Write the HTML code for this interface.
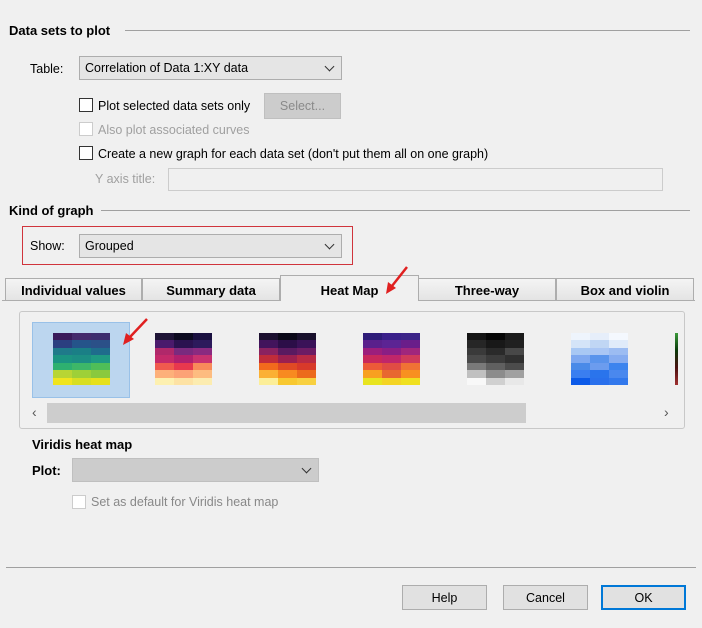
<!DOCTYPE html>
<html><head><style>
body{margin:0;width:702px;height:628px;background:#f0f0f0;font-family:"Liberation Sans",sans-serif;font-size:12.5px;color:#000;position:relative;overflow:hidden}
.a{position:absolute}
.h{font-weight:bold;font-size:13px}
.line{position:absolute;height:1px;background:#a0a0a0}
.combo{position:absolute;background:#e5e5e5;border:1px solid #adadad;box-sizing:border-box;padding:4px 5px;font-size:12.5px}
.combo:after{content:"";position:absolute;right:8px;top:6px;width:6px;height:6px;border-right:1px solid #333;border-bottom:1px solid #333;transform:rotate(45deg)}
.cb{position:absolute;width:14px;height:14px;border:1px solid #333;background:#fff;box-sizing:border-box}
.tab{position:absolute;top:278px;height:22px;border:1px solid #adadad;border-bottom:none;background:linear-gradient(#f4f4f4,#e4e4e4);box-sizing:border-box;text-align:center;font-weight:bold;font-size:13px;line-height:24px}
.hm{position:absolute;top:333px;width:57px;height:52px;display:grid;grid-template-columns:repeat(3,1fr);grid-template-rows:repeat(7,1fr)}
.btn{position:absolute;top:585px;height:25px;width:85px;background:#e1e1e1;border:1px solid #adadad;box-sizing:border-box;text-align:center;line-height:24px}
.gray{color:#a0a0a0}
</style></head><body>
<div class="a h" style="left:9px;top:23px">Data sets to plot</div>
<div class="line" style="left:125px;top:30px;width:565px"></div>
<div class="a" style="left:30px;top:62px">Table:</div>
<div class="combo" style="left:79px;top:56px;width:263px;height:24px">Correlation of Data 1:XY data</div>
<div class="cb" style="left:79px;top:98px"></div>
<div class="a" style="left:98px;top:99px">Plot selected data sets only</div>
<div class="a" style="left:264px;top:93px;width:77px;height:26px;background:#ccc;border:1px solid #bfbfbf;box-sizing:border-box;text-align:center;line-height:24px;color:#8a8a8a">Select...</div>
<div class="cb" style="left:79px;top:122px;border-color:#ccc"></div>
<div class="a gray" style="left:98px;top:123px">Also plot associated curves</div>
<div class="cb" style="left:79px;top:146px"></div>
<div class="a" style="left:98px;top:147px">Create a new graph for each data set (don't put them all on one graph)</div>
<div class="a gray" style="left:95px;top:172px">Y axis title:</div>
<div class="a" style="left:168px;top:168px;width:495px;height:23px;border:1px solid #ccc;box-sizing:border-box;background:#f0f0f0"></div>
<div class="a h" style="left:9px;top:203px">Kind of graph</div>
<div class="line" style="left:101px;top:210px;width:589px"></div>
<div class="a" style="left:22px;top:226px;width:331px;height:39px;border:1px solid #d0343c;box-sizing:border-box"></div>
<div class="a" style="left:30px;top:239px">Show:</div>
<div class="combo" style="left:79px;top:234px;width:263px;height:24px">Grouped</div>

<div class="line" style="left:2px;top:300px;width:693px;background:#adadad"></div>
<div class="tab" style="left:5px;width:137px">Individual values</div>
<div class="tab" style="left:142px;width:138px">Summary data</div>
<div class="tab" style="left:280px;top:275px;height:26px;width:139px;background:#f0f0f0;line-height:30px;z-index:2">Heat Map</div>
<div class="tab" style="left:418px;width:138px">Three-way</div>
<div class="tab" style="left:556px;width:138px">Box and violin</div>
<svg class="a" style="left:380px;top:264px;z-index:3" width="30" height="35"><path d="M27 3 L12 22" stroke="#e02020" stroke-width="2.5"/><path d="M6 30 L8 18 L16 24 Z" fill="#e02020"/></svg>

<div class="a" style="left:19px;top:311px;width:666px;height:118px;border:1px solid #c8c8c8;border-radius:3px;box-sizing:border-box;background:#f0f0f0"></div>
<div class="a" style="left:32px;top:322px;width:98px;height:76px;background:#bcd6ef;border:1px solid #99c1e8;box-sizing:border-box"></div>
<svg class="a" style="left:120px;top:316px;z-index:3" width="30" height="32"><path d="M27 3 L10 21" stroke="#e02020" stroke-width="2.5"/><path d="M3 29 L6 17 L14 23 Z" fill="#e02020"/></svg>

<div class="hm" style="left:53px"><i style="background:#3a1a5a"></i><i style="background:#442a6c"></i><i style="background:#3d2d6e"></i><i style="background:#2b3f80"></i><i style="background:#25548a"></i><i style="background:#2b5088"></i><i style="background:#1f7a8a"></i><i style="background:#1a7f86"></i><i style="background:#1f6c8c"></i><i style="background:#1b9482"></i><i style="background:#1c8e84"></i><i style="background:#1f9a83"></i><i style="background:#2eb070"></i><i style="background:#3db768"></i><i style="background:#4fbe58"></i><i style="background:#b8d534"></i><i style="background:#9ed038"></i><i style="background:#8ac93e"></i><i style="background:#f0e41e"></i><i style="background:#d8de22"></i><i style="background:#e6e01c"></i></div>
<div class="hm" style="left:155px"><i style="background:#1e1436"></i><i style="background:#0c0a20"></i><i style="background:#1a1040"></i><i style="background:#4a1a6c"></i><i style="background:#2a1250"></i><i style="background:#2c1a5c"></i><i style="background:#b0286a"></i><i style="background:#7a2a7e"></i><i style="background:#8a2a80"></i><i style="background:#c42a6a"></i><i style="background:#b0206e"></i><i style="background:#c83270"></i><i style="background:#f05a4e"></i><i style="background:#e8384e"></i><i style="background:#f88a5a"></i><i style="background:#fdb07a"></i><i style="background:#fca276"></i><i style="background:#fdbc80"></i><i style="background:#fdf0b0"></i><i style="background:#fde2a4"></i><i style="background:#fcecb0"></i></div>
<div class="hm" style="left:259px"><i style="background:#1c1030"></i><i style="background:#0a0818"></i><i style="background:#18102c"></i><i style="background:#42145c"></i><i style="background:#2c0e48"></i><i style="background:#3a1258"></i><i style="background:#8a2260"></i><i style="background:#5a1a60"></i><i style="background:#6c1c64"></i><i style="background:#c02c3a"></i><i style="background:#9c2050"></i><i style="background:#b82a44"></i><i style="background:#f26a1c"></i><i style="background:#e04a24"></i><i style="background:#d83a2a"></i><i style="background:#fbb034"></i><i style="background:#f88a20"></i><i style="background:#ec6a1c"></i><i style="background:#fcee98"></i><i style="background:#f8c830"></i><i style="background:#f8d040"></i></div>
<div class="hm" style="left:363px"><i style="background:#2e1c78"></i><i style="background:#3a208a"></i><i style="background:#3c2488"></i><i style="background:#5a208c"></i><i style="background:#5c2494"></i><i style="background:#6a1e8a"></i><i style="background:#9c1e7c"></i><i style="background:#8a1e84"></i><i style="background:#a0267c"></i><i style="background:#c8285c"></i><i style="background:#c0266a"></i><i style="background:#d03a5a"></i><i style="background:#ec5a38"></i><i style="background:#e04c44"></i><i style="background:#f07234"></i><i style="background:#f8a020"></i><i style="background:#e86830"></i><i style="background:#f89020"></i><i style="background:#e8e420"></i><i style="background:#f4d424"></i><i style="background:#f0e020"></i></div>
<div class="hm" style="left:467px"><i style="background:#141414"></i><i style="background:#050505"></i><i style="background:#1a1a1a"></i><i style="background:#262626"></i><i style="background:#181818"></i><i style="background:#202020"></i><i style="background:#3a3a3a"></i><i style="background:#2a2a2a"></i><i style="background:#484848"></i><i style="background:#4a4a4a"></i><i style="background:#3c3c3c"></i><i style="background:#303030"></i><i style="background:#7a7a7a"></i><i style="background:#606060"></i><i style="background:#4c4c4c"></i><i style="background:#c0c0c0"></i><i style="background:#8c8c8c"></i><i style="background:#a0a0a0"></i><i style="background:#f8f8f8"></i><i style="background:#d0d0d0"></i><i style="background:#e8e8e8"></i></div>
<div class="hm" style="left:571px"><i style="background:#eef4fc"></i><i style="background:#e6eefa"></i><i style="background:#f4f8fe"></i><i style="background:#d4e4f8"></i><i style="background:#c0d6f4"></i><i style="background:#e0ebfa"></i><i style="background:#a8c8f4"></i><i style="background:#aac6f4"></i><i style="background:#9cbcf2"></i><i style="background:#7ea8f0"></i><i style="background:#5a94ec"></i><i style="background:#86acf0"></i><i style="background:#4a8ae8"></i><i style="background:#6c9cee"></i><i style="background:#3c84ee"></i><i style="background:#3a7ef0"></i><i style="background:#2a74ec"></i><i style="background:#4a88ee"></i><i style="background:#0c5ae8"></i><i style="background:#2a70ec"></i><i style="background:#3278ec"></i></div>
<div class="a" style="left:675px;top:333px;width:3px;height:52px;background:linear-gradient(#3a9a3a,#0a3a0a,#4a1010,#a03030)"></div>
<div class="a" style="left:47px;top:403px;width:479px;height:20px;background:#cdcdcd"></div>
<div class="a" style="left:32px;top:404px;color:#555;font-size:14px">‹</div>
<div class="a" style="left:664px;top:404px;color:#555;font-size:14px">›</div>

<div class="a h" style="left:32px;top:437px">Viridis heat map</div>
<div class="a h" style="left:32px;top:463px">Plot:</div>
<div class="combo" style="left:72px;top:458px;width:247px;height:24px;background:#cccccc;border-color:#bfbfbf"></div>
<div class="cb" style="left:72px;top:495px;border-color:#ccc"></div>
<div class="a gray" style="left:91px;top:495px;color:#888">Set as default for Viridis heat map</div>
<div class="line" style="left:6px;top:567px;width:690px"></div>
<div class="btn" style="left:402px">Help</div>
<div class="btn" style="left:503px">Cancel</div>
<div class="btn" style="left:601px;border:2px solid #0078d7;line-height:22px">OK</div>
</body></html>
